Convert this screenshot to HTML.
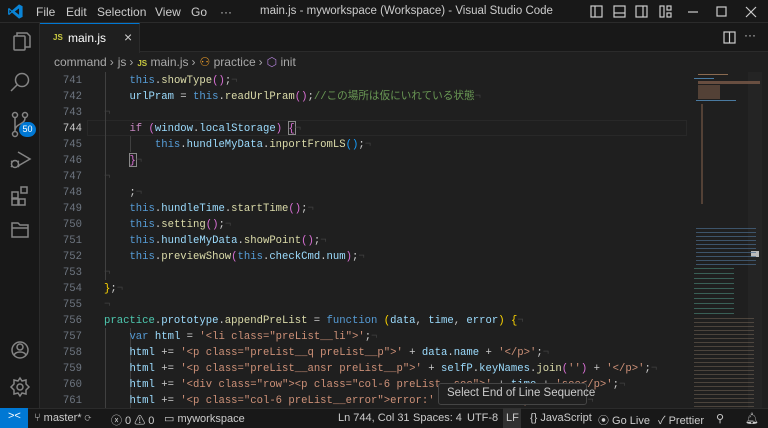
<!DOCTYPE html>
<html><head><meta charset="utf-8">
<style>
*{margin:0;padding:0;box-sizing:border-box}
body{width:768px;height:428px;overflow:hidden;background:#1f1f1f;font-family:"Liberation Sans","Noto Sans CJK JP",sans-serif;color:#ccc;position:relative}
.abs{position:absolute}
#title{left:0;top:0;width:768px;height:23px;background:#181818;border-bottom:1px solid #2b2b2b}
#title span{position:absolute;top:5px;font-size:12px;color:#ccc}
#act{left:0;top:23px;width:40px;height:385px;background:#181818;border-right:1px solid #2b2b2b}
#tabs{left:40px;top:23px;width:728px;height:29px;background:#181818;border-bottom:1px solid #2b2b2b}
#tab{left:40px;top:23px;width:100px;height:30px;background:#1f1f1f;border-top:1px solid #0078d4;border-right:1px solid #2b2b2b}
#bc{left:54px;top:55px;font-size:12px;color:#a9a9a9;white-space:nowrap}
#bc i{font-style:normal;margin:0 4px 0 3px}
.code{position:absolute;left:104px;font-family:"Liberation Mono","Noto Sans CJK JP",monospace;font-size:10.6px;line-height:16px;white-space:pre;color:#cccccc}
.ln{position:absolute;left:40px;width:42px;text-align:right;font-family:"Liberation Mono",monospace;font-size:10.6px;line-height:16px;color:#6e7681}
.k{color:#569cd6}.f{color:#dcdcaa}.v{color:#9cdcfe}.s{color:#ce9178}.c{color:#6a9955}.t{color:#4ec9b0}
.p1{color:#ffd700}.p2{color:#da70d6}.p3{color:#179fff}.w{color:#404040}
.guide{position:absolute;width:1px;background:#404040}
#status{left:0;top:408px;width:768px;height:20px;background:#181818;border-top:1px solid #2b2b2b}
#status span{position:absolute;top:3px;font-size:11px;color:#ccc;white-space:nowrap}
.mm{position:absolute;height:1px}
</style></head><body>

<div id="title" class="abs">
<svg class="abs" style="left:7px;top:3px" width="17" height="17" viewBox="0 0 24 24"><path d="M17 2 L22 4.5 V19.5 L17 22 L7 13.5 L3 17 L1.5 16 V8 L3 7 L7 10.5 Z M17 7.5 L11 12 L17 16.5Z M3.5 9.5 V14.5 L6 12Z" fill="#0a84d6" fill-rule="evenodd"/></svg>
<span style="left:36px">File</span><span style="left:66px">Edit</span><span style="left:97px">Selection</span><span style="left:155px">View</span><span style="left:191px">Go</span><span style="left:220px">···</span>
<span style="left:260px;font-size:11.5px">main.js - myworkspace (Workspace) - Visual Studio Code</span>
<svg class="abs" style="left:590px;top:5px" width="180" height="14" viewBox="0 0 180 14" fill="none" stroke="#ccc" stroke-width="1.2">
<rect x="1" y="1" width="11" height="11"/><line x1="5" y1="1" x2="5" y2="12"/>
<rect x="24" y="1" width="11" height="11"/><line x1="24" y1="8" x2="35" y2="8"/>
<rect x="46" y="1" width="11" height="11"/><line x1="53" y1="1" x2="53" y2="12"/>
<rect x="70" y="1" width="4" height="11"/><rect x="77" y="1" width="4" height="4"/><rect x="77" y="8" width="4" height="4"/>
<line x1="98" y1="7" x2="108" y2="7"/>
<rect x="127" y="2" width="9" height="9"/>
<path d="M156 2 L166 12 M166 2 L156 12"/>
</svg>
</div>

<div id="act" class="abs">
<svg width="40" height="385" viewBox="0 0 40 385" fill="none" stroke="#858585" stroke-width="1.5">
<rect x="14" y="13" width="11" height="14" rx="1"/><path d="M17 13 V10 H27 L30 13 V24 H25"/>
<circle cx="22" cy="57" r="6.5"/><line x1="17" y1="62" x2="11" y2="68"/>
<circle cx="15" cy="92" r="2.5"/><circle cx="25" cy="92" r="2.5"/><circle cx="15" cy="111" r="2.5"/><path d="M15 95 V108 M25 95 C25 102 15 100 15 108"/>
<path d="M18 129 L30 136 L18 143"/><circle cx="15" cy="141" r="3.5"/><path d="M11 138 L13 139 M11 144 L12 143 M19 138 L17 139 M19 144 L18 143"/>
<rect x="12" y="176" width="6" height="6"/><rect x="19" y="176" width="6" height="6"/><rect x="12" y="169" width="6" height="6"/><rect x="21" y="164" width="6" height="6"/>
<path d="M12 200 H18 L20 202 H28 V214 H12 Z M12 205 H28"/>
<circle cx="20" cy="327" r="8"/><circle cx="20" cy="324" r="3"/><path d="M14 332 C16 328 24 328 26 332"/>
<circle cx="20" cy="364" r="3"/><path d="M20 355 L22 358 L26 357 L26 361 L29 364 L26 367 L26 371 L22 370 L20 373 L18 370 L14 371 L14 367 L11 364 L14 361 L14 357 L18 358 Z"/>
</svg>
<div class="abs" style="left:19px;top:99px;width:17px;height:15px;border-radius:8px;background:#0078d4;color:#fff;font-size:9px;text-align:center;line-height:15px">50</div>
</div>

<div id="tabs" class="abs">
<svg class="abs" style="left:683px;top:8px" width="14" height="13" fill="none" stroke="#ccc" stroke-width="1.2"><rect x="1" y="1" width="11" height="11"/><line x1="6.5" y1="1" x2="6.5" y2="12"/></svg>
<span class="abs" style="left:704px;top:5px;font-size:12px">···</span>
</div>
<div id="tab" class="abs">
<span class="abs" style="left:13px;top:9px;font-size:8px;font-weight:bold;color:#cbcb41">JS</span>
<span class="abs" style="left:28px;top:7px;font-size:12px;color:#fff">main.js</span>
<span class="abs" style="left:84px;top:5px;font-size:14px;color:#ccc">×</span>
</div>

<div id="bc" class="abs">command<i>›</i>js<i>›</i><span style="color:#cbcb41;font-size:8px;font-weight:bold">JS</span> main.js<i>›</i><span style="color:#ee9d28">⚇</span> practice<i>›</i><span style="color:#b180d7">⬡</span> init</div>

<div class="abs" style="left:87px;top:120px;width:600px;height:16px;border:1px solid #282828"></div>

<div class="guide" style="left:105px;top:72px;height:208px"></div>
<div class="guide" style="left:105px;top:328px;height:80px"></div>
<div class="guide" style="left:130px;top:136px;height:16px"></div>
<div class="guide" style="left:130px;top:328px;height:80px"></div>

<div class="ln" style="top:73px">741<br>742<br>743<br><span style="color:#ccc">744</span><br>745<br>746<br>747<br>748<br>749<br>750<br>751<br>752<br>753<br>754<br>755<br>756<br>757<br>758<br>759<br>760<br>761<br>762</div>

<div class="abs" style="left:288px;top:121px;width:8px;height:14px;border:1px solid #888"></div>
<div class="abs" style="left:129px;top:153px;width:8px;height:14px;border:1px solid #888"></div>

<div class="code" style="top:73px">    <span class="k">this</span>.<span class="f">showType</span><span class="p2">()</span>;<span class="w">¬</span>
    <span class="v">urlPram</span> = <span class="k">this</span>.<span class="f">readUrlPram</span><span class="p2">()</span>;<span class="c">//この場所は仮にいれている状態</span><span class="w">¬</span>
<span class="w">¬</span>
    <span class="c" style="color:#c586c0">if</span> <span class="p2">(</span><span class="v">window</span>.<span class="v">localStorage</span><span class="p2">)</span> <span class="p2">{</span><span class="w">¬</span>
        <span class="k">this</span>.<span class="v">hundleMyData</span>.<span class="f">inportFromLS</span><span class="p3">()</span>;<span class="w">¬</span>
    <span class="p2">}</span><span class="w">¬</span>
<span class="w">¬</span>
    ;<span class="w">¬</span>
    <span class="k">this</span>.<span class="v">hundleTime</span>.<span class="f">startTime</span><span class="p2">()</span>;<span class="w">¬</span>
    <span class="k">this</span>.<span class="f">setting</span><span class="p2">()</span>;<span class="w">¬</span>
    <span class="k">this</span>.<span class="v">hundleMyData</span>.<span class="f">showPoint</span><span class="p2">()</span>;<span class="w">¬</span>
    <span class="k">this</span>.<span class="f">previewShow</span><span class="p2">(</span><span class="k">this</span>.<span class="v">checkCmd</span>.<span class="v">num</span><span class="p2">)</span>;<span class="w">¬</span>
<span class="w">¬</span>
<span class="p1">}</span>;<span class="w">¬</span>
<span class="w">¬</span>
<span class="t">practice</span>.<span class="v">prototype</span>.<span class="f">appendPreList</span> = <span class="k">function</span> <span class="p1">(</span><span class="v">data</span>, <span class="v">time</span>, <span class="v">error</span><span class="p1">)</span> <span class="p1">{</span><span class="w">¬</span>
    <span class="k">var</span> <span class="v">html</span> = <span class="s">'&lt;li class="preList__li"&gt;'</span>;<span class="w">¬</span>
    <span class="v">html</span> += <span class="s">'&lt;p class="preList__q preList__p"&gt;'</span> + <span class="v">data</span>.<span class="v">name</span> + <span class="s">'&lt;/p&gt;'</span>;<span class="w">¬</span>
    <span class="v">html</span> += <span class="s">'&lt;p class="preList__ansr preList__p"&gt;'</span> + <span class="v">selfP</span>.<span class="v">keyNames</span>.<span class="f">join</span><span class="p2">(</span><span class="s">''</span><span class="p2">)</span> + <span class="s">'&lt;/p&gt;'</span>;<span class="w">¬</span>
    <span class="v">html</span> += <span class="s">'&lt;div class="row"&gt;&lt;p class="col-6 preList__sec"&gt;'</span> + <span class="v">time</span> + <span class="s">'sec&lt;/p&gt;'</span>;<span class="w">¬</span>
    <span class="v">html</span> += <span class="s">'&lt;p class="col-6 preList__error"&gt;error:'</span> + <span class="v">error</span> + <span class="s">'&lt;/p&gt;&lt;/div&gt;'</span>;<span class="w">¬</span>
    <span class="v">html</span> += <span class="s">'&lt;/li&gt;'</span>;</div>

<div class="abs" style="left:688px;top:52px;width:80px;height:356px;background:#1f1f1f">
<div class="abs" style="left:60px;top:20px;width:14px;height:336px;background:#242424"></div>
<div class="abs" style="left:63px;top:199px;width:8px;height:6px;background:#bbb"></div>
<div class="mm" style="left:10px;top:22px;width:30px;background:#8a6a50"></div>
<div class="mm" style="left:6px;top:26px;width:20px;background:#4a7aa0"></div>
<div class="abs" style="left:10px;top:29px;width:62px;height:3px;background:#7a5a48;opacity:.8"></div>
<div class="abs" style="left:10px;top:33px;width:22px;height:14px;background:#6a5040;opacity:.7"></div>
<div class="mm" style="left:8px;top:48px;width:40px;background:#4a7aa0"></div>
<div class="abs" style="left:13px;top:52px;width:2px;height:100px;background:#6a5040;opacity:.7"></div>
<div class="abs" style="left:8px;top:176px;width:60px;height:40px;background:repeating-linear-gradient(#4a6a8a 0 1px,transparent 1px 4px);opacity:.7"></div>
<div class="abs" style="left:6px;top:216px;width:40px;height:50px;background:repeating-linear-gradient(#4a8a7a 0 1px,transparent 1px 5px);opacity:.6"></div>
<div class="abs" style="left:6px;top:266px;width:60px;height:90px;background:repeating-linear-gradient(#7a6a5a 0 1px,transparent 1px 4px);opacity:.5"></div>
</div>

<div class="abs" style="left:438px;top:383px;width:149px;height:22px;background:#202020;border:1px solid #454545;border-radius:3px;font-size:11.5px;color:#ccc;padding:3px 0 0 8px;white-space:nowrap">Select End of Line Sequence</div>

<div id="status" class="abs">
<div class="abs" style="left:0;top:-1px;width:28px;height:20px;background:#0078d4"></div>
<span style="left:8px;top:1px;color:#fff">&gt;&lt;</span>
<span style="left:34px">⑂ master* ⟳</span>
<span style="left:111px">ⓧ 0 ⚠ 0</span>
<span style="left:164px">▭ myworkspace</span>
<span style="left:338px">Ln 744, Col 31</span>
<span style="left:413px">Spaces: 4</span>
<span style="left:467px">UTF-8</span>
<div class="abs" style="left:503px;top:-1px;width:18px;height:20px;background:#313131"></div>
<span style="left:506px">LF</span>
<span style="left:530px">{} JavaScript</span>
<span style="left:598px">⦿ Go Live</span>
<span style="left:658px">✓ Prettier</span>
<span style="left:716px">⚲</span>
<span style="left:745px">🔔︎</span>
</div>
</body></html>
